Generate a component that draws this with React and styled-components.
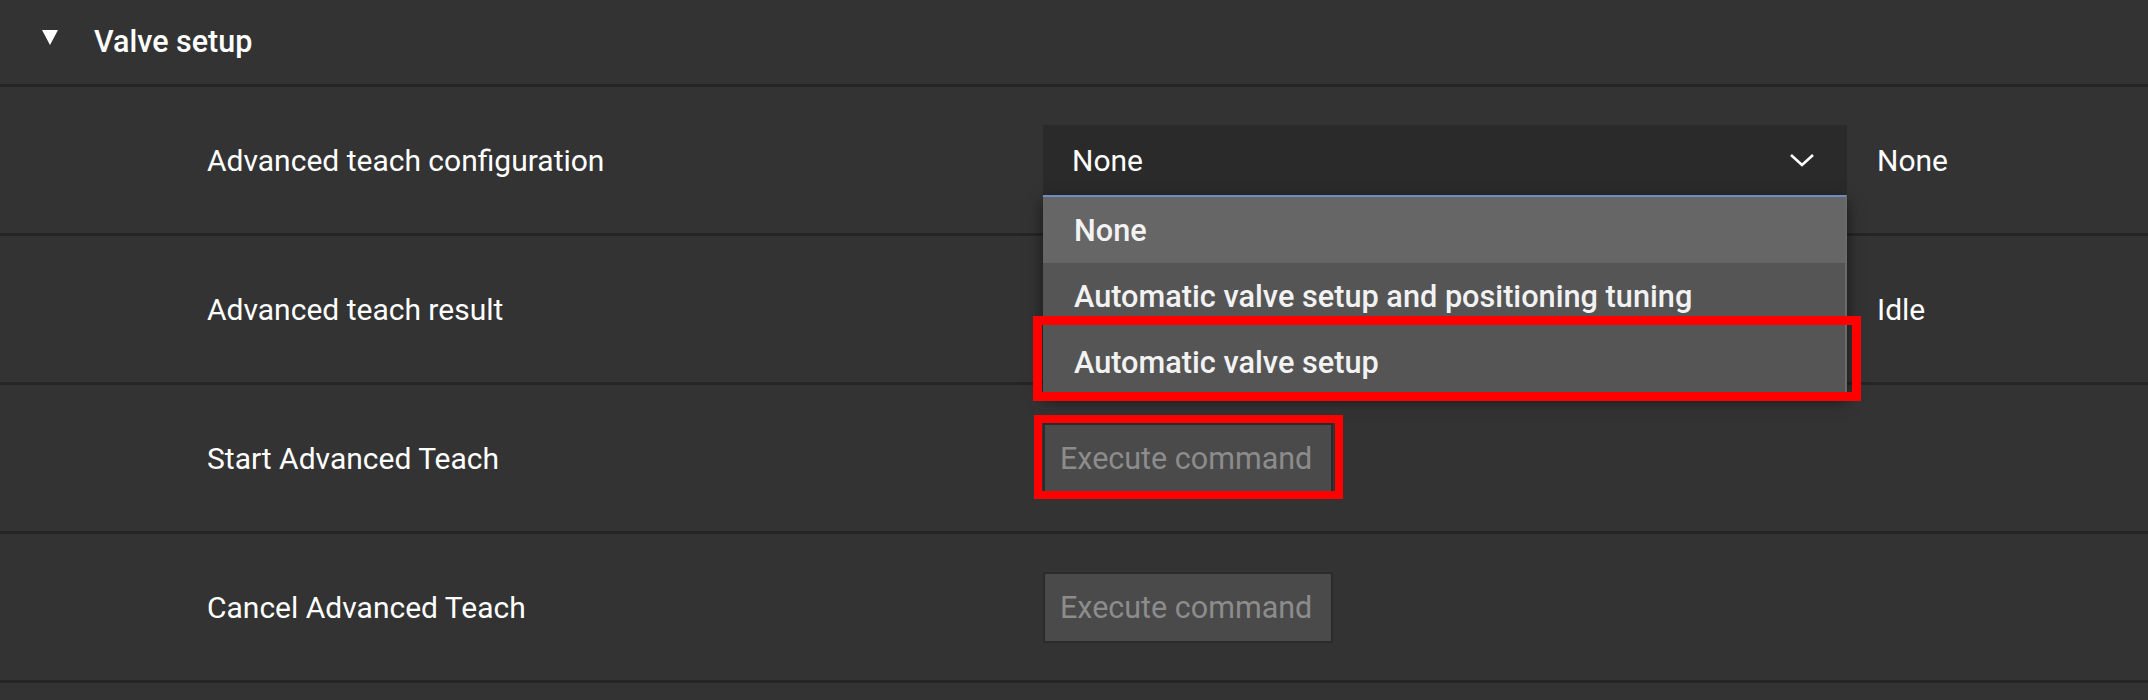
import React from 'react';
import styled, { createGlobalStyle } from 'styled-components';

const GlobalStyle = createGlobalStyle`
  html, body {
    margin: 0;
    padding: 0;
    background-color: #333333;
  }
  body {
    font-family: Roboto, "Liberation Sans", sans-serif;
    color: #ffffff;
  }
`;

const Page = styled.div`
  width: 2148px;
  min-height: 700px;
  background-color: #333333;
`;

const SectionHeader = styled.div`
  display: flex;
  align-items: center;
  height: 87px;
  padding-left: 42px;
  padding-bottom: 2px;
  box-sizing: border-box;
  border-bottom: 3px solid #252525;
`;

const Caret = styled.svg`
  width: 16px;
  height: 15px;
  margin-top: -7px;
  margin-right: 36px;
  flex-shrink: 0;
`;

const SectionTitle = styled.span`
  font-size: 30.5px;
  font-weight: 500;
  color: #ffffff;
`;

const Row = styled.div`
  display: grid;
  grid-template-columns: 836px 834px 1fr;
  align-items: center;
  height: 146px;
  padding-left: 207px;
  border-bottom: 3px solid #252525;
`;

const Label = styled.span`
  font-size: 30px;
  font-weight: 400;
  color: #ffffff;
`;

const Value = styled.span`
  font-size: 30px;
  font-weight: 400;
  color: #ffffff;
`;

const SelectWrap = styled.div`
  position: relative;
  width: 804px;
`;

const SelectBox = styled.div`
  display: flex;
  align-items: center;
  justify-content: space-between;
  height: 70px;
  padding: 0 32px 0 29px;
  box-sizing: border-box;
  background-color: #2a2a2a;
  font-size: 30px;
  color: #ffffff;
`;

const Chevron = styled.svg`
  width: 26px;
  height: 14px;
`;

const Menu = styled.ul`
  position: absolute;
  top: 100%;
  left: 0;
  right: 0;
  margin: 0;
  padding: 0;
  list-style: none;
  border-top: 2px solid #6c8cc2;
  border-right: 2px solid #6b6b6b;
  box-shadow: 0 6px 14px rgba(0, 0, 0, 0.55);
  z-index: 2;
`;

const MenuItem = styled.li`
  position: relative;
  display: flex;
  align-items: center;
  height: 66px;
  padding-left: 31px;
  background-color: ${(p) => (p.$active ? '#666666' : '#555555')};
  font-size: 30.7px;
  font-weight: 500;
  color: #f2f2f2;
  white-space: nowrap;
`;

const Highlight = styled.div`
  position: absolute;
  top: ${(p) => p.$top}px;
  left: ${(p) => p.$left}px;
  right: ${(p) => p.$right}px;
  bottom: ${(p) => p.$bottom}px;
  border: ${(p) => p.$width}px solid #ff0000;
  pointer-events: none;
  z-index: 3;
`;

const ButtonWrap = styled.div`
  position: relative;
  width: 290px;
`;

const CommandButton = styled.button`
  width: 290px;
  height: 71px;
  padding: 0 0 0 2px;
  background-color: #4a4a4a;
  border: 2px solid #2b2b2b;
  font-family: Roboto, "Liberation Sans", sans-serif;
  font-size: 30.5px;
  color: #8c8c8c;
  text-align: left;
  text-indent: 13px;
  cursor: default;
`;

const options = [
  'None',
  'Automatic valve setup and positioning tuning',
  'Automatic valve setup',
];

function App() {
  return (
    <Page>
      <GlobalStyle />
      <SectionHeader>
        <Caret viewBox="0 0 16 15">
          <polygon points="0,0 16,0 8,15" fill="#ffffff" />
        </Caret>
        <SectionTitle>Valve setup</SectionTitle>
      </SectionHeader>

      <Row>
        <Label>Advanced teach configuration</Label>
        <SelectWrap>
          <SelectBox>
            <span>None</span>
            <Chevron viewBox="0 0 26 14">
              <polyline
                points="2,2 13,12 24,2"
                fill="none"
                stroke="#ffffff"
                strokeWidth="2.6"
              />
            </Chevron>
          </SelectBox>
          <Menu>
            {options.map((o, i) => (
              <MenuItem key={o} $active={i === 0}>
                {o}
                {i === 2 && (
                  <Highlight
                    $top={-13}
                    $left={-10}
                    $right={-16}
                    $bottom={-6}
                    $width={9}
                  />
                )}
              </MenuItem>
            ))}
          </Menu>
        </SelectWrap>
        <Value>None</Value>
      </Row>

      <Row>
        <Label>Advanced teach result</Label>
        <div />
        <Value>Idle</Value>
      </Row>

      <Row>
        <Label>Start Advanced Teach</Label>
        <ButtonWrap>
          <CommandButton>Execute command</CommandButton>
          <Highlight $top={-8} $left={-9} $right={-10} $bottom={-5} $width={8} />
        </ButtonWrap>
        <div />
      </Row>

      <Row>
        <Label>Cancel Advanced Teach</Label>
        <ButtonWrap>
          <CommandButton>Execute command</CommandButton>
        </ButtonWrap>
        <div />
      </Row>
    </Page>
  );
}

export default App;
